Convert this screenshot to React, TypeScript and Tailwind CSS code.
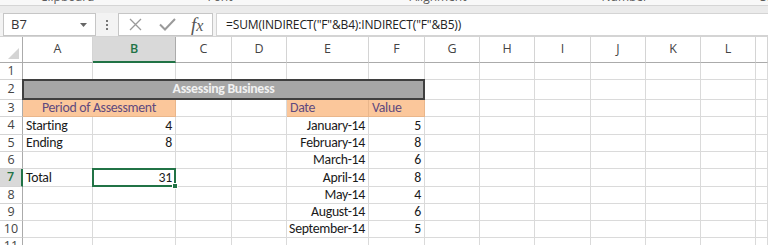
import React from 'react';

type Cell = {
  span?: number;
  text?: string;
  align?: 'left' | 'right' | 'center';
  fill?: string;
  selected?: boolean;
  title?: boolean;
};

const COLS = ['A', 'B', 'C', 'D', 'E', 'F', 'G', 'H', 'I', 'J', 'K', 'L', ''];

const blank = (n: number): Cell[] => Array.from({ length: n }, () => ({}));

const rows: Cell[][] = [
  blank(13),
  [{ span: 6, text: 'Assessing Business', title: true }, ...blank(7)],
  [
    { span: 2, text: 'Period of Assessment', align: 'center', fill: 'orange' },
    {},
    {},
    { text: 'Date', fill: 'orange' },
    { text: 'Value', fill: 'orange' },
    ...blank(7),
  ],
  [{ text: 'Starting' }, { text: '4', align: 'right' }, {}, {}, { text: 'January-14', align: 'right' }, { text: '5', align: 'right' }, ...blank(7)],
  [{ text: 'Ending' }, { text: '8', align: 'right' }, {}, {}, { text: 'February-14', align: 'right' }, { text: '8', align: 'right' }, ...blank(7)],
  [{}, {}, {}, {}, { text: 'March-14', align: 'right' }, { text: '6', align: 'right' }, ...blank(7)],
  [{ text: 'Total' }, { text: '31', align: 'right', selected: true }, {}, {}, { text: 'April-14', align: 'right' }, { text: '8', align: 'right' }, ...blank(7)],
  [{}, {}, {}, {}, { text: 'May-14', align: 'right' }, { text: '4', align: 'right' }, ...blank(7)],
  [{}, {}, {}, {}, { text: 'August-14', align: 'right' }, { text: '6', align: 'right' }, ...blank(7)],
  [{}, {}, {}, {}, { text: 'September-14', align: 'right' }, { text: '5', align: 'right' }, ...blank(7)],
  blank(13),
];

const spanClass: Record<number, string> = {
  1: 'col-span-1',
  2: 'col-span-2',
  6: 'col-span-6',
};

const alignClass = {
  left: 'justify-start pl-[3px]',
  right: 'justify-end pr-[3px]',
  center: 'justify-center',
};

function GridCell({ cell }: { cell: Cell }) {
  const span = cell.span ?? 1;
  if (cell.title) {
    return (
      <div className={`${spanClass[span]} relative border-r border-b border-[#dadada]`}>
        <div className="absolute -left-[1px] -top-[1px] -right-[1px] -bottom-[1px] flex items-center justify-center border-2 border-[#3f3f3f] bg-[#a6a6a6] font-bold text-[#f2f2f2]">
          {cell.text}
        </div>
      </div>
    );
  }
  const fill = cell.fill === 'orange' ? 'bg-[#fbc79b] text-[#5f4a7e] border-[#e9b68b]' : 'border-[#dadada] text-[#1a1a1a]';
  return (
    <div
      className={`${spanClass[span]} relative flex items-end whitespace-nowrap leading-[16px] border-r border-b ${fill} ${alignClass[cell.align ?? 'left']}`}
    >
      {cell.text}
      {cell.selected && (
        <div className="absolute -left-[1px] -top-[1px] -right-[1px] -bottom-[1px] border-2 border-[#217346] z-10">
          <div className="absolute -right-[4px] -bottom-[4px] w-[6px] h-[6px] bg-[#217346] border border-white" />
        </div>
      )}
    </div>
  );
}

const ribbonLabels = [
  { label: 'Clipboard', ml: 'ml-[40px]' },
  { label: 'Font', ml: 'ml-[113px]' },
  { label: 'Alignment', ml: 'ml-[177px]' },
  { label: 'Number', ml: 'ml-[135px]' },
  { label: 'Styles', ml: 'ml-[112px]' },
];

export default function App() {
  return (
    <div className="w-[768px] h-[245px] overflow-hidden bg-white font-['Open_Sans',sans-serif]">
      {/* cut-off ribbon bottom */}
      <div className="h-[6px] overflow-hidden bg-[#f8f8f8] border-b border-[#d5d5d5]">
        <div className="flex -mt-[11px] text-[12px] leading-[16px] text-[#5a5a5a]">
          {ribbonLabels.map(r => (
            <span key={r.label} className={r.ml}>{r.label}</span>
          ))}
        </div>
      </div>
      <div className="h-[7px] bg-[#ebebeb]" />

      {/* formula bar */}
      <div className="flex h-[24px] bg-[#f3f3f3] border-b border-[#d4d4d4]">
        <div className="ml-[3px] w-[93px] h-[23px] flex items-center justify-between bg-white border border-[#c6c6c6] pl-[7px] pr-[8px] text-[13px] text-[#333]">
          <span>B7</span>
          <svg width="7" height="4" viewBox="0 0 7 4"><path d="M0 0h7L3.5 4z" fill="#666" /></svg>
        </div>
        <div className="w-[22px] flex flex-col items-center justify-center gap-[2px]">
          <span className="w-[2px] h-[2px] bg-[#777]" />
          <span className="w-[2px] h-[2px] bg-[#777]" />
          <span className="w-[2px] h-[2px] bg-[#777]" />
        </div>
        <div className="w-[95px] h-[23px] flex items-center bg-white border border-[#c6c6c6]">
          <svg className="ml-[10px]" width="13" height="13" viewBox="0 0 13 13">
            <path d="M1 1l11 11M12 1L1 12" stroke="#9a9a9a" strokeWidth="1.3" fill="none" />
          </svg>
          <svg className="ml-[17px]" width="17" height="13" viewBox="0 0 17 13">
            <path d="M1 6.5l5 5L16 1" stroke="#9a9a9a" strokeWidth="2" fill="none" />
          </svg>
          <span className="ml-[15px] font-['Liberation_Serif',serif] italic text-[19px] leading-none text-[#555]">
            f<span className="text-[16px]">x</span>
          </span>
        </div>
        <div className="ml-[3px] flex-1 h-[23px] flex items-center bg-white border-l border-t border-b border-[#d4d4d4] pl-[9px] text-[12px] tracking-[-0.15px] text-[#222]">
          =SUM(INDIRECT("F"&amp;B4):INDIRECT("F"&amp;B5))
        </div>
      </div>

      {/* sheet */}
      <div className="grid grid-cols-[23px_70px_83px_56px_55px_82px_56px_55px_55px_56px_55px_55px_55px_1fr] grid-rows-[26px_17px_20px_17px_18px_17px_17px_18px_17px_17px_17px_17px] font-['Carlito','Lato',sans-serif] text-[13.8px] tracking-[-0.3px]">
        {/* header row */}
        <div className="relative border-r border-b border-[#ababab] bg-white">
          <svg className="absolute right-[3px] bottom-[3px]" width="11" height="11" viewBox="0 0 11 11">
            <path d="M11 0v11H0z" fill="#d4d4d4" />
          </svg>
        </div>
        {COLS.map((c, i) =>
          c === 'B' ? (
            <div key={i} className="flex items-center justify-center bg-[#d9d9d9] border-r border-[#ababab] border-b-2 border-b-[#217346] text-[#217346] font-['Open_Sans',sans-serif] text-[12.5px] tracking-normal font-semibold">
              {c}
            </div>
          ) : (
            <div key={i} className="flex items-center justify-center bg-white border-r border-b border-[#d4d4d4] border-b-[#ababab] text-[#444] font-['Open_Sans',sans-serif] text-[12.5px] tracking-normal">
              {c}
            </div>
          )
        )}

        {rows.map((row, r) => (
          <React.Fragment key={r}>
            {r === 6 ? (
              <div className="flex items-center justify-center bg-[#d9d9d9] border-b border-[#d4d4d4] border-r-2 border-r-[#217346] text-[#217346] font-['Open_Sans',sans-serif] text-[12.5px] tracking-normal font-semibold">
                {r + 1}
              </div>
            ) : (
              <div className="flex items-center justify-center bg-white border-b border-[#d4d4d4] border-r border-r-[#ababab] text-[#444] font-['Open_Sans',sans-serif] text-[12.5px] tracking-normal">
                {r + 1}
              </div>
            )}
            {row.map((cell, i) => (
              <GridCell key={i} cell={cell} />
            ))}
          </React.Fragment>
        ))}
      </div>
    </div>
  );
}
